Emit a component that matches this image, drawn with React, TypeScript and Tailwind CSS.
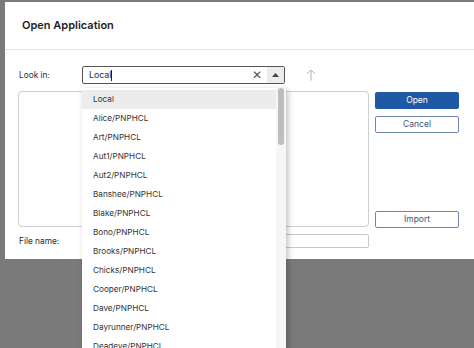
import React from 'react';

const items = [
  'Local',
  'Alice/PNPHCL',
  'Art/PNPHCL',
  'Aut1/PNPHCL',
  'Aut2/PNPHCL',
  'Banshee/PNPHCL',
  'Blake/PNPHCL',
  'Bono/PNPHCL',
  'Brooks/PNPHCL',
  'Chicks/PNPHCL',
  'Cooper/PNPHCL',
  'Dave/PNPHCL',
  'Dayrunner/PNPHCL',
  'Deadeye/PNPHCL',
];

const App: React.FC = () => {
  return (
    <div className="relative w-[474px] h-[348px] overflow-hidden bg-[#7a7a7a] pt-[2px] pl-[5px] font-['Inter',sans-serif] text-[#2b2b2b]">
      {/* dialog */}
      <div className="flex flex-col w-[469px] h-[257px] bg-white">
        <div className="flex items-center h-[48px] px-[17px] border-b border-[#e2e2e2]">
          <h1 className="text-[11px] font-semibold text-[#1e1e1e]">Open Application</h1>
        </div>

        <div className="flex items-center mt-[16px] pl-[14px]">
          <span className="w-[63px] text-[8.3px]">Look in:</span>
          <div className="flex items-center w-[203px] h-[18px] border border-[#555] rounded-[2px] pl-[6px]">
            <span className="text-[8.8px]">Local</span>
            <span className="w-px h-[11px] bg-[#222]" />
            <span className="ml-auto text-[12px] leading-none text-[#555] mr-[5px]">✕</span>
            <span className="flex items-center justify-center w-[17px] h-full bg-[#ececec]">
              <svg width="7" height="4" viewBox="0 0 7 4"><path d="M0 4 L3.5 0 L7 4 Z" fill="#444" /></svg>
            </span>
          </div>
          <svg className="ml-[21px]" width="10" height="12" viewBox="0 0 10 12" fill="none" stroke="#b5b5b5" strokeWidth="1">
            <path d="M5 11.5 V1 M1 5 L5 1 L9 5" />
          </svg>
        </div>

        <div className="flex mt-[7px] pl-[13px]">
          <div className="w-[351px] h-[136px] border border-[#cfcfcf] rounded-[4px]" />
          <div className="flex flex-col w-[84px] ml-[6px] mt-[1px]">
            <button className="h-[17px] bg-[#1f59a6] rounded-[2px] text-[8.5px] text-white">Open</button>
            <button className="h-[17px] mt-[7px] border border-[#6d86b3] rounded-[2px] text-[8.5px] text-[#3b5580]">Cancel</button>
            <button className="h-[17px] mt-[78px] border border-[#6d86b3] rounded-[2px] text-[8.5px] text-[#3b5580]">Import</button>
          </div>
        </div>

        <div className="flex items-center mt-[6px] pl-[14px]">
          <span className="w-[63px] text-[8.3px]">File name:</span>
          <div className="w-[287px] h-[14px] border border-[#c8c8c8] rounded-[2px]" />
        </div>
      </div>

      {/* dropdown */}
      <div className="absolute left-[82px] top-[88px] w-[204px] h-[270px] bg-white shadow-[2px_2px_6px_rgba(0,0,0,0.25)] flex">
        <div className="flex-1 pt-[2px]">
          {items.map((item, i) => (
            <div
              key={item}
              className={
                i === 0
                  ? 'flex items-center h-[19px] pl-[11px] text-[8.2px] text-[#333] bg-[#ececec]'
                  : 'flex items-center h-[19px] pl-[11px] text-[8.2px] text-[#333]'
              }
            >
              {item}
            </div>
          ))}
        </div>
        <div className="w-[10px] bg-[#f6f6f6] pl-[2px]">
          <div className="w-[6px] h-[57px] rounded-[3px] bg-[#bdbdbd]" />
        </div>
      </div>
    </div>
  );
};

export default App;
